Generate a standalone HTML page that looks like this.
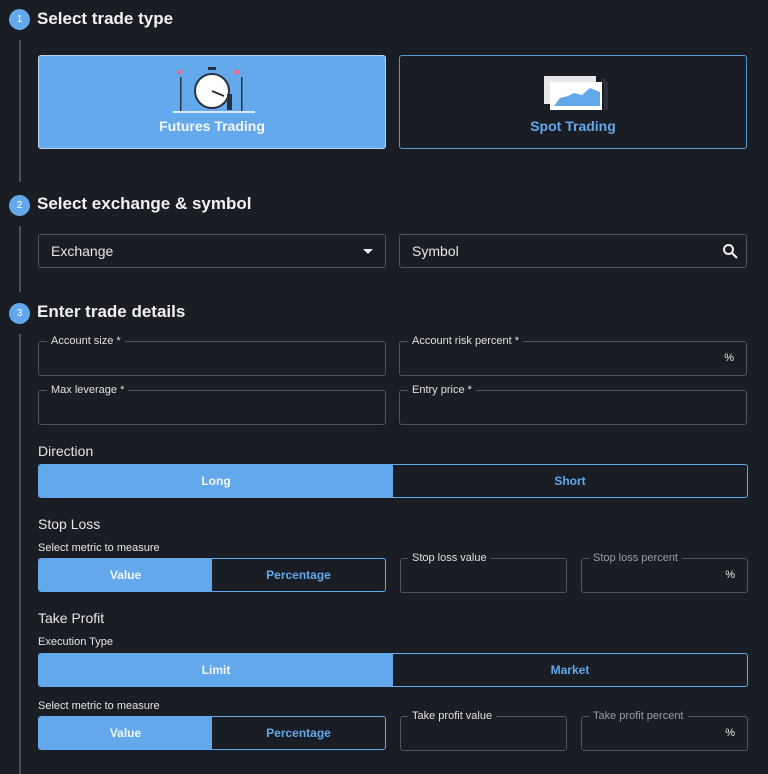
<!DOCTYPE html>
<html><head><style>
*{box-sizing:border-box;margin:0;padding:0}
body{width:768px;height:768px;background:#1a1d24;font-family:"Liberation Sans",sans-serif;color:#e6e6e6;position:relative;overflow:hidden}
.a{position:absolute}
.circ{width:21px;height:21px;border-radius:50%;background:#62a8ea;color:#fff;font-size:10px;text-align:center;line-height:21px}
.h{font-size:17px;font-weight:bold;color:#f2f2f2}
.vl{width:2px;background:#4a4d55;left:19px}
.inp{border:1px solid #50535b;border-radius:3px}
.lab{font-size:11px;color:#e0e0e0;background:#1a1d24;padding:0 4px;top:-8px;left:8px;position:absolute;line-height:14px}
.t{font-size:14px}
.sm{font-size:11px}
.tog{border:1px solid #62a8ea;border-radius:3px;display:flex;overflow:hidden}
.tog div{flex:1;display:flex;align-items:center;justify-content:center;font-size:12px;font-weight:bold;color:#62a8ea}
.tog .on{background:#62a8ea;color:#f4f8fc}
</style></head><body>
<div class="a circ" style="left:9px;top:9px">1</div>
<div class="a h" style="left:37px;top:9px">Select trade type</div>
<div class="a vl" style="top:40px;height:142px"></div>
<div class="a" style="left:38px;top:55px;width:348px;height:94px;background:#63a9eb;border:1px solid #b8d6f3;border-radius:3px">
 <svg class="a" style="left:130px;top:8px" width="90" height="50" viewBox="0 0 90 50">
  <path d="M8 6h6l-2 2 2 2h-6z" fill="#e86b8a"/><path d="M65 6h6l-2 2 2 2h-6z" fill="#e86b8a"/>
  <rect x="11" y="13" width="1.5" height="34" fill="#2b2f3e"/><rect x="72" y="13" width="1.5" height="34" fill="#2b2f3e"/>
  <rect x="39" y="3" width="8" height="3" fill="#2b2f3e"/>
  <circle cx="43" cy="27" r="17" fill="#fff" stroke="#2b2f3e" stroke-width="2"/>
  <path d="M43 27l12 5" stroke="#2b2f3e" stroke-width="2"/>
  <rect x="58" y="30" width="5" height="16" fill="#2b2f3e"/>
  <rect x="4" y="47" width="82" height="2" fill="#d8e8f7"/>
 </svg>
 <div class="a" style="left:0;right:0;top:62px;text-align:center;font-size:14px;font-weight:bold;color:#f4f8fc">Futures Trading</div>
</div>
<div class="a" style="left:399px;top:55px;width:348px;height:94px;border:1px solid #5a94cc;border-radius:3px">
 <svg class="a" style="left:142px;top:12px" width="70" height="46" viewBox="0 0 70 46">
  <rect x="2" y="8" width="52" height="28" fill="#e8e8ea"/>
  <rect x="8" y="14" width="52" height="28" fill="#fff"/>
  <path d="M12 38 L18 30 L26 28 L32 25 L40 27 L48 20 L58 24 L58 38z" fill="#62a8ea"/>
  <path d="M58 12l4 4v26h4v-28l-4-4z" fill="#2b2f3e"/>
 </svg>
 <div class="a" style="left:0;right:0;top:62px;text-align:center;font-size:14px;font-weight:bold;color:#62a8ea">Spot Trading</div>
</div>

<div class="a circ" style="left:9px;top:195px">2</div>
<div class="a h" style="left:37px;top:194px">Select exchange &amp; symbol</div>
<div class="a vl" style="top:226px;height:66px"></div>
<div class="a inp" style="left:38px;top:234px;width:348px;height:34px"><span class="a t" style="left:12px;top:8px">Exchange</span>
 <svg class="a" style="right:12px;top:14px" width="10" height="6"><path d="M0 0h10L5 5z" fill="#eee"/></svg></div>
<div class="a inp" style="left:399px;top:234px;width:348px;height:34px"><span class="a t" style="left:12px;top:8px">Symbol</span>
 <svg class="a" style="right:8px;top:8px" width="16" height="16" viewBox="0 0 16 16"><circle cx="6.5" cy="6.5" r="4.5" fill="none" stroke="#eee" stroke-width="2"/><path d="M10 10l5 5" stroke="#eee" stroke-width="2.2"/></svg></div>

<div class="a circ" style="left:9px;top:303px">3</div>
<div class="a h" style="left:37px;top:302px">Enter trade details</div>
<div class="a vl" style="top:334px;height:440px"></div>
<div class="a inp" style="left:38px;top:341px;width:348px;height:35px"><span class="lab">Account size *</span></div>
<div class="a inp" style="left:399px;top:341px;width:348px;height:35px"><span class="lab">Account risk percent *</span><span class="a sm" style="right:12px;top:10px">%</span></div>
<div class="a inp" style="left:38px;top:390px;width:348px;height:35px"><span class="lab">Max leverage *</span></div>
<div class="a inp" style="left:399px;top:390px;width:348px;height:35px"><span class="lab">Entry price *</span></div>

<div class="a t" style="left:38px;top:443px">Direction</div>
<div class="a tog" style="left:38px;top:464px;width:710px;height:34px"><div class="on">Long</div><div>Short</div></div>

<div class="a t" style="left:38px;top:516px">Stop Loss</div>
<div class="a sm" style="left:38px;top:542px">Select metric to measure</div>
<div class="a tog" style="left:38px;top:558px;width:348px;height:34px"><div class="on">Value</div><div>Percentage</div></div>
<div class="a inp" style="left:400px;top:558px;width:167px;height:35px"><span class="lab" style="left:7px">Stop loss value</span></div>
<div class="a inp" style="left:581px;top:558px;width:167px;height:35px"><span class="lab" style="left:7px;color:#9a9ca2">Stop loss percent</span><span class="a sm" style="right:12px;top:10px">%</span></div>

<div class="a t" style="left:38px;top:610px">Take Profit</div>
<div class="a sm" style="left:38px;top:636px">Execution Type</div>
<div class="a tog" style="left:38px;top:653px;width:710px;height:34px"><div class="on">Limit</div><div>Market</div></div>

<div class="a sm" style="left:38px;top:700px">Select metric to measure</div>
<div class="a tog" style="left:38px;top:716px;width:348px;height:34px"><div class="on">Value</div><div>Percentage</div></div>
<div class="a inp" style="left:400px;top:716px;width:167px;height:35px"><span class="lab" style="left:7px">Take profit value</span></div>
<div class="a inp" style="left:581px;top:716px;width:167px;height:35px"><span class="lab" style="left:7px;color:#9a9ca2">Take profit percent</span><span class="a sm" style="right:12px;top:10px">%</span></div>
</body></html>
